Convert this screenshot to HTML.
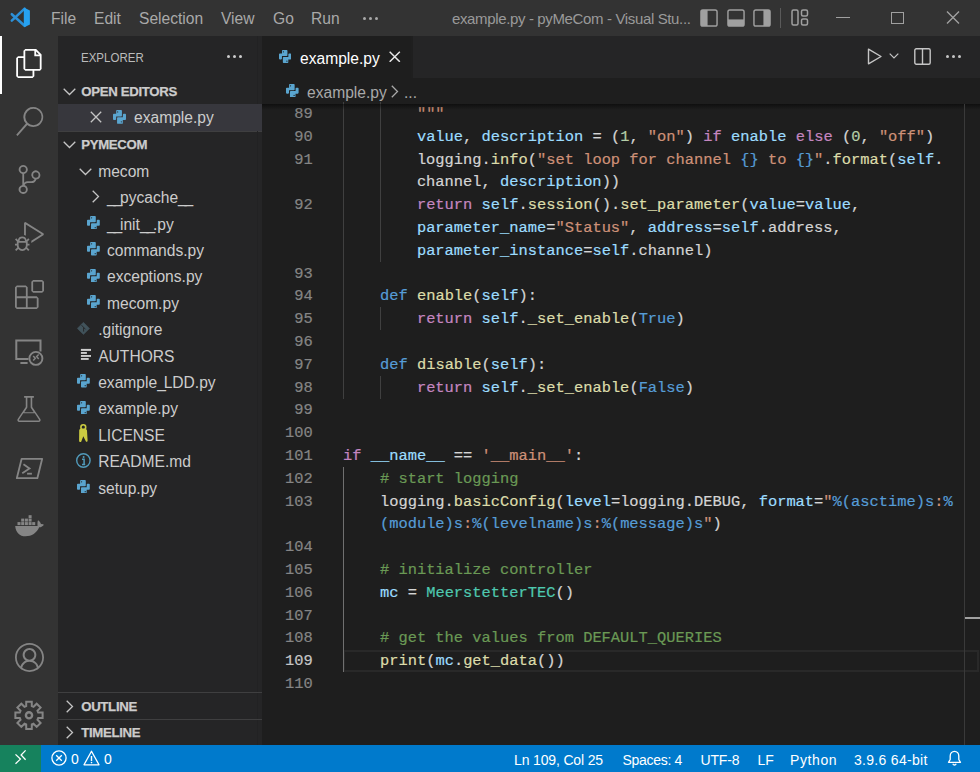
<!DOCTYPE html>
<html><head><meta charset="utf-8">
<style>
*{margin:0;padding:0;box-sizing:border-box}
html,body{width:980px;height:772px;overflow:hidden;background:#1e1e1e;font-family:"Liberation Sans",sans-serif}
.a{position:absolute}
.mt{position:absolute;color:#a9a9a9;font-size:15.6px;white-space:pre;line-height:18px}
.si{position:absolute;color:#cccccc;font-size:15.6px;white-space:pre;line-height:18px}
.hd{position:absolute;color:#cccccc;font-size:13.2px;font-weight:bold;letter-spacing:-0.3px;white-space:pre;line-height:16px;-webkit-text-stroke:0.25px}
.ln{position:absolute;left:0;width:312.8px;text-align:right;color:#858585;font-family:"Liberation Mono",monospace;font-size:15.4px;line-height:22.8px;white-space:pre;-webkit-text-stroke:0.2px}
.cl{position:absolute;left:343px;white-space:pre;color:#d4d4d4;font-family:"Liberation Mono",monospace;font-size:15.4px;line-height:22.8px;-webkit-text-stroke:0.2px}
.v{color:#9cdcfe}.f{color:#dcdcaa}.s{color:#ce9178}.k{color:#c586c0}.b{color:#569cd6}.n{color:#b5cea8}.c{color:#6a9955}.t{color:#4ec9b0}
.st{position:absolute;color:#fff;font-size:14px;letter-spacing:-0.15px;white-space:pre;line-height:16px}
svg{display:block}
</style></head><body>

<div class="a" style="left:0;top:0;width:980px;height:36px;background:#333333"></div>
<div class="a" style="left:0;top:36px;width:58px;height:709px;background:#333333"></div>
<div class="a" style="left:58px;top:36px;width:204px;height:709px;background:#252526"></div>
<div class="a" style="left:262px;top:36px;width:718px;height:42px;background:#252526"></div>
<div class="a" style="left:262px;top:36px;width:149px;height:42px;background:#1e1e1e"></div>
<div class="a" style="left:0;top:745px;width:980px;height:27px;background:#007acc"></div>
<div class="a" style="left:0;top:745px;width:41px;height:27px;background:#16825d"></div>
<svg class="a" style="left:5px;top:3px" width="32" height="30" viewBox="0 0 32 30"><path d="M19.6 5.6L6.8 17.6M6.8 11.2L19.6 22.8" stroke="#2c90d8" stroke-width="2.5" stroke-linecap="round"/><path d="M18.8 5.5L19.9 4.9 24.9 7.4V21.4L19.9 23.9 18.8 23.2Z" fill="#26a2f2"/></svg>
<div class="mt" style="left:51px;top:10px">File</div>
<div class="mt" style="left:94px;top:10px">Edit</div>
<div class="mt" style="left:139px;top:10px">Selection</div>
<div class="mt" style="left:221px;top:10px">View</div>
<div class="mt" style="left:273px;top:10px">Go</div>
<div class="mt" style="left:311px;top:10px">Run</div>
<div class="a" style="left:363px;top:17px;width:3px;height:3px;border-radius:50%;background:#a9a9a9"></div>
<div class="a" style="left:369px;top:17px;width:3px;height:3px;border-radius:50%;background:#a9a9a9"></div>
<div class="a" style="left:375px;top:17px;width:3px;height:3px;border-radius:50%;background:#a9a9a9"></div>
<div class="mt" style="left:452px;top:10px;color:#9a9a9a;font-size:15px;letter-spacing:-0.36px">example.py - pyMeCom - Visual Stu...</div>
<svg class="a" style="left:700.3px;top:8.5px" width="18" height="18" viewBox="0 0 19 19"><rect x="1" y="1" width="17" height="17" rx="2" fill="none" stroke="#a0a0a0" stroke-width="1.5"/><rect x="1" y="1" width="7" height="17" fill="#a0a0a0"/></svg>
<svg class="a" style="left:726.6px;top:8.5px" width="18" height="18" viewBox="0 0 19 19"><rect x="1" y="1" width="17" height="17" rx="2" fill="none" stroke="#a0a0a0" stroke-width="1.5"/><rect x="1" y="11" width="17" height="7" fill="#a0a0a0"/></svg>
<svg class="a" style="left:752.8px;top:8.5px" width="18" height="18" viewBox="0 0 19 19"><rect x="1" y="1" width="17" height="17" rx="2" fill="none" stroke="#a0a0a0" stroke-width="1.5"/><rect x="11" y="1" width="7" height="17" fill="#a0a0a0"/></svg>
<div class="a" style="left:780px;top:8px;width:1px;height:20px;background:#5a5a5a"></div>
<svg class="a" style="left:791px;top:9px" width="18" height="17" viewBox="0 0 18 17"><rect x="1" y="1" width="6" height="15" rx="1.5" fill="none" stroke="#a0a0a0" stroke-width="1.5"/><rect x="10.5" y="1" width="6" height="6" rx="1.5" fill="none" stroke="#a0a0a0" stroke-width="1.5"/><rect x="10.5" y="10" width="6" height="6" rx="1.5" fill="none" stroke="#a0a0a0" stroke-width="1.5"/></svg>
<div class="a" style="left:836px;top:17px;width:14px;height:1.3px;background:#a0a0a0"></div>
<div class="a" style="left:891px;top:12px;width:13px;height:12px;border:1.4px solid #a0a0a0"></div>
<svg class="a" style="left:946px;top:11px" width="14" height="13" viewBox="0 0 14 13"><path d="M1 .5L13 12.5M13 .5L1 12.5" stroke="#a0a0a0" stroke-width="1.4"/></svg>
<div class="a" style="left:0;top:36px;width:2px;height:58px;background:#ffffff"></div>
<svg class="a" style="left:14.5px;top:49.4px" width="29" height="29" viewBox="0 0 24 24" fill="#ffffff"><path d="M17.5 0h-9L7 1.5V6H2.5L1 7.5v15.07L2.5 24h12.07L16 22.57V18h4.7l1.3-1.43V4.5L17.5 0zm0 2.12l2.38 2.38H17.5V2.12zm-3 20.38h-12v-15H7v9.07L8.5 18h6v4.5zm6-6h-12v-15H16V6h4.5v10.5z"/></svg>
<svg class="a" style="left:14.5px;top:106.9px" width="29" height="29" viewBox="0 0 24 24" fill="#858585"><path d="M15.25 0a8.25 8.25 0 0 0-6.18 13.72L1 22.88l1.12 1.12 8.05-9.12A8.251 8.251 0 1 0 15.25.01V0zm0 15a6.75 6.75 0 1 1 0-13.5 6.75 6.75 0 0 1 0 13.5z"/></svg>
<svg class="a" style="left:14.5px;top:165.0px" width="29" height="29" viewBox="0 0 24 24" fill="#858585"><path d="M21.007 8.222A3.738 3.738 0 0 0 15.045 5.2a3.737 3.737 0 0 0 1.156 6.583 2.988 2.988 0 0 1-2.668 1.67h-2.99a4.456 4.456 0 0 0-2.989 1.165V7.4a3.737 3.737 0 1 0-1.494 0v9.117a3.776 3.776 0 1 0 1.816.099 2.99 2.99 0 0 1 2.668-1.667h2.99a4.484 4.484 0 0 0 4.223-3.039 3.736 3.736 0 0 0 3.25-3.687zM4.565 3.738a2.242 2.242 0 1 1 4.484 0 2.242 2.242 0 0 1-4.484 0zm4.484 16.441a2.242 2.242 0 1 1-4.484 0 2.242 2.242 0 0 1 4.484 0zm8.221-9.715a2.242 2.242 0 1 1 0-4.485 2.242 2.242 0 0 1 0 4.485z"/></svg>
<svg class="a" style="left:14.5px;top:222.1px" width="29" height="29" viewBox="0 0 24 24" fill="#858585"><path d="M10.94 13.5l-1.32 1.32a3.73 3.73 0 0 0-7.24 0L1.06 13.5 0 14.56l1.72 1.72-.22.22V18H0v1.5h1.5v.08c.077.489.214.966.41 1.42L0 22.94 1.06 24l1.65-1.65A4.308 4.308 0 0 0 6 24a4.31 4.31 0 0 0 3.29-1.650L10.940 24 12 22.94 10.09 21c.198-.464.336-.951.41-1.45v-.1H12V18h-1.5v-1.5l-.22-.22L12 14.56l-1.06-1.060zM6 13.5a2.25 2.25 0 0 1 2.25 2.25h-4.5A2.25 2.25 0 0 1 6 13.5zm3 6a3.33 3.33 0 0 1-3 3 3.33 3.33 0 0 1-3-3v-2.25h6v2.25zm14.76-9.9v1.26L13.5 17.37V15.6l8.5-5.37L9 2v9.46a5.07 5.07 0 0 0-1.5-.72V.63L8.64 0l15.12 9.6z"/></svg>
<svg class="a" style="left:14.5px;top:279.7px" width="29" height="29" viewBox="0 0 24 24" fill="#858585"><path d="M13.5 1.5L15 0h7.5L24 1.5V9l-1.5 1.5H15L13.5 9V1.5zm1.5 0V9h7.5V1.5H15zM0 15V6l1.5-1.5H9L10.5 6v7.5H18l1.5 1.5v7.5L18 24H1.5L0 22.5V15zm9-1.5V6H1.5v7.5H9zM9 15H1.5v7.5H9V15zm1.5 7.5H18V15h-7.5v7.5z"/></svg>
<svg class="a" style="left:0;top:332px" width="58" height="40" viewBox="0 0 58 40" fill="none" stroke="#858585"><path d="M28.5 27H16.3V8.4H40.5V19.5" stroke-width="2"/><path d="M20.4 31H27.6" stroke-width="2"/><circle cx="35.9" cy="26.4" r="6.5" stroke-width="1.9"/><path d="M33.2 23.9L35.3 26.2 33.2 28.5M38.7 22.4L36.6 24.6 38.7 26.9" stroke-width="1.5"/></svg>
<svg class="a" style="left:16.0px;top:396.0px" width="26" height="26" viewBox="0 0 24 24" fill="#858585"><path d="M22.47 21.26L15 10.21V1.5h1.5V0h-9v1.5H9v8.71L1.53 21.26A1.79 1.79 0 0 0 3 24h18a1.79 1.79 0 0 0 1.47-2.74zM10.24 11a1.38 1.38 0 0 0 .26-.82V1.5h3v8.71c.001.293.092.579.26.82l2.6 3.97H7.64L10.24 11zM21 22.5H3a.31.31 0 0 1-.28-.16.33.33 0 0 1 0-.32L6.66 16h10.68l3.94 6c.03.052.046.11.045.17a.33.33 0 0 1-.045.17.31.31 0 0 1-.28.16z"/></svg>
<svg class="a" style="left:14.5px;top:453.5px" width="29" height="29" viewBox="0 0 24 24" fill="#858585"><path d="M5.5 4h17l-4 16h-17z" fill="none" stroke="#858585" stroke-width="1.5" stroke-linejoin="round"/><path d="M7 8.5l5 3.5-6 4" fill="none" stroke="#858585" stroke-width="1.5"/><path d="M10 16.3h4" stroke="#858585" stroke-width="1.5"/></svg>
<svg class="a" style="left:0;top:500px" width="58" height="58" viewBox="0 0 58 58" fill="#858585"><path d="M15.2 25.9H37.6C37.4 24 37.4 21.8 38 20.2 39.6 21.2 40.6 22.6 41 24.2 42 23.9 43 24.1 43.9 24.7 43 26.3 41.2 27.2 39.2 27.3 36.8 33 31.6 36.3 25.6 36.3 19.6 36.3 15.6 32 15.2 25.9Z"/><g><rect x="17.5" y="22.1" width="3" height="3"/><rect x="21.2" y="22.1" width="3" height="3"/><rect x="24.9" y="22.1" width="3" height="3"/><rect x="28.6" y="22.1" width="3" height="3"/><rect x="32.2" y="22.1" width="3" height="3"/><rect x="21.2" y="18.6" width="3" height="3"/><rect x="24.9" y="18.6" width="3" height="3"/><rect x="28.6" y="18.6" width="3" height="3"/><rect x="28.6" y="15.2" width="3" height="3"/></g></svg>
<svg class="a" style="left:14.5px;top:643.0px" width="29" height="29" viewBox="0 0 16 16" fill="#858585"><path d="M16 7.992C16 3.58 12.416 0 8 0S0 3.58 0 7.992c0 2.43 1.104 4.62 2.832 6.09.016.016.032.016.032.032.144.112.288.224.448.336.08.048.144.111.224.175A7.98 7.98 0 0 0 8.016 16a7.98 7.980 0 0 0 4.48-1.375c.08-.048.144-.111.224-.16.144-.111.304-.223.448-.335.016-.016.032-.016.032-.032 1.696-1.487 2.8-3.676 2.8-6.106zm-8 7.001c-1.504 0-2.880-.48-4.016-1.279.016-.128.048-.255.08-.383a4.17 4.17 0 0 1 .416-.991c.176-.304.384-.576.64-.816.24-.24.528-.463.816-.639.304-.176.624-.304.976-.4A4.15 4.15 0 0 1 8 10.342a4.185 4.185 0 0 1 2.928 1.166c.368.368.656.8.864 1.295.112.288.192.592.24.911A7.03 7.03 0 0 1 8 14.993zm-2.448-7.4a2.49 2.49 0 0 1-.208-1.024c0-.351.064-.703.208-1.023.144-.32.336-.607.576-.847.24-.24.528-.431.848-.575.32-.144.672-.208 1.024-.208.368 0 .704.064 1.024.208.32.144.608.336.848.575.24.24.432.528.576.847.144.32.208.672.208 1.023 0 .368-.064.704-.208 1.023a2.84 2.84 0 0 1-.576.848 2.84 2.84 0 0 1-.848.575 2.715 2.715 0 0 1-2.064 0 2.84 2.84 0 0 1-.848-.575 2.526 2.526 0 0 1-.56-.848zm7.424 5.306c0-.032-.016-.048-.016-.08a5.22 5.22 0 0 0-.688-1.406 4.883 4.883 0 0 0-1.088-1.135 5.207 5.207 0 0 0-1.04-.608 2.82 2.82 0 0 0 .464-.383 4.2 4.2 0 0 0 .624-.784 3.624 3.624 0 0 0 .528-1.934 3.71 3.71 0 0 0-.288-1.47 3.799 3.799 0 0 0-.816-1.199 3.845 3.845 0 0 0-1.2-.8 3.72 3.72 0 0 0-1.472-.287 3.72 3.72 0 0 0-1.472.288 3.631 3.631 0 0 0-1.2.815 3.84 3.84 0 0 0-.8 1.199 3.71 3.71 0 0 0-.288 1.47c0 .352.048.688.144 1.007.096.336.224.64.4.927.16.288.384.544.624.784.144.144.304.271.48.383a5.12 5.12 0 0 0-1.04.624c-.416.32-.784.703-1.088 1.119a4.999 4.999 0 0 0-.688 1.406c-.016.032-.016.064-.016.08C1.776 11.636.992 9.91.992 7.992.992 4.140 4.144.991 8 .991s7.008 3.149 7.008 7.001a6.96 6.96 0 0 1-2.032 4.907z"/></svg>
<svg class="a" style="left:0;top:687px" width="58" height="58" viewBox="0 0 58 58"><path d="M26.19 19.12 L26.23 14.68 L31.77 14.68 L31.81 19.12 L33.51 19.82 L36.67 16.71 L40.59 20.63 L37.48 23.79 L38.18 25.49 L42.62 25.53 L42.62 31.07 L38.18 31.11 L37.48 32.81 L40.59 35.97 L36.67 39.89 L33.51 36.78 L31.81 37.48 L31.77 41.92 L26.23 41.92 L26.19 37.48 L24.49 36.78 L21.33 39.89 L17.41 35.97 L20.52 32.81 L19.82 31.11 L15.38 31.07 L15.38 25.53 L19.82 25.49 L20.52 23.79 L17.41 20.63 L21.33 16.71 L24.49 19.82Z" fill="none" stroke="#858585" stroke-width="2" stroke-linejoin="miter"/><circle cx="29" cy="28.3" r="3.1" fill="none" stroke="#858585" stroke-width="2.4"/></svg>
<div class="a" style="left:81px;top:50.5px;color:#bbbbbb;font-size:13.4px;white-space:pre;line-height:14px;transform:scaleX(0.86);transform-origin:0 0">EXPLORER</div>
<div class="a" style="left:227px;top:55px;width:3px;height:3px;border-radius:50%;background:#cccccc"></div>
<div class="a" style="left:233px;top:55px;width:3px;height:3px;border-radius:50%;background:#cccccc"></div>
<div class="a" style="left:239px;top:55px;width:3px;height:3px;border-radius:50%;background:#cccccc"></div>
<svg class="a" style="left:63px;top:88px" width="13" height="8" viewBox="0 0 13 8"><path d="M.7 .7l5.8 5.8 5.8-5.8" fill="none" stroke="#c5c5c5" stroke-width="1.3"/></svg>
<div class="hd" style="left:81.2px;top:84px">OPEN EDITORS</div>
<div class="a" style="left:58px;top:104px;width:204px;height:27px;background:#37373d"></div>
<svg class="a" style="left:90px;top:111px" width="12" height="12" viewBox="0 0 12 12"><path d="M.8 .8l10.4 10.4M11.2 .8L.8 11.2" stroke="#c5c5c5" stroke-width="1.3"/></svg>
<svg viewBox="0 0 12.3 13" width="13" height="13.739837398373982" style="position:absolute;left:112.8px;top:110px"><g fill="#5aa5cf" stroke="#5aa5cf" stroke-width="1.6" stroke-linejoin="round"><path d="M3.8 .8H7.65V5.25H2.15V8.6H.8V4.4H3.8Z"/><path d="M8.5 12.2H4.65V7.75H10.15V4.4H11.5V8.6H8.5Z"/></g><circle cx="4.4" cy="1.8" r=".6" fill="#37373d"/><circle cx="7.9" cy="11.2" r=".6" fill="#37373d"/></svg>
<div class="si" style="left:134px;top:109.2px">example.py</div>
<div class="a" style="left:58px;top:131px;width:204px;height:1px;background:#3f3f40"></div>
<svg class="a" style="left:63px;top:141px" width="13" height="8" viewBox="0 0 13 8"><path d="M.7 .7l5.8 5.8 5.8-5.8" fill="none" stroke="#c5c5c5" stroke-width="1.3"/></svg>
<div class="hd" style="left:81.2px;top:137px">PYMECOM</div>
<svg class="a" style="left:79px;top:168.2px" width="13" height="8" viewBox="0 0 13 8"><path d="M.7 .7l5.8 5.8 5.8-5.8" fill="none" stroke="#c5c5c5" stroke-width="1.3"/></svg>
<div class="si" style="left:98.2px;top:162.8px">mecom</div>
<svg class="a" style="left:92.3px;top:189.79999999999998px" width="8" height="13" viewBox="0 0 8 13"><path d="M.7 .7l5.8 5.8-5.8 5.8" fill="none" stroke="#c5c5c5" stroke-width="1.3"/></svg>
<div class="si" style="left:107.0px;top:189.2px"><span style="letter-spacing:-2.2px">_</span><span style="letter-spacing:-2.2px">_</span>pycache<span style="letter-spacing:-2.2px">_</span><span style="letter-spacing:-2.2px">_</span></div>
<svg viewBox="0 0 12.3 13" width="12.8" height="13.528455284552845" style="position:absolute;left:86.8px;top:215.7px"><g fill="#5aa5cf" stroke="#5aa5cf" stroke-width="1.6" stroke-linejoin="round"><path d="M3.8 .8H7.65V5.25H2.15V8.6H.8V4.4H3.8Z"/><path d="M8.5 12.2H4.65V7.75H10.15V4.4H11.5V8.6H8.5Z"/></g><circle cx="4.4" cy="1.8" r=".6" fill="#252526"/><circle cx="7.9" cy="11.2" r=".6" fill="#252526"/></svg>
<div class="si" style="left:107.0px;top:215.6px"><span style="letter-spacing:-2.2px">_</span><span style="letter-spacing:-2.2px">_</span>init<span style="letter-spacing:-2.2px">_</span><span style="letter-spacing:-2.2px">_</span>.py</div>
<svg viewBox="0 0 12.3 13" width="12.8" height="13.528455284552845" style="position:absolute;left:86.8px;top:242.09999999999997px"><g fill="#5aa5cf" stroke="#5aa5cf" stroke-width="1.6" stroke-linejoin="round"><path d="M3.8 .8H7.65V5.25H2.15V8.6H.8V4.4H3.8Z"/><path d="M8.5 12.2H4.65V7.75H10.15V4.4H11.5V8.6H8.5Z"/></g><circle cx="4.4" cy="1.8" r=".6" fill="#252526"/><circle cx="7.9" cy="11.2" r=".6" fill="#252526"/></svg>
<div class="si" style="left:107.0px;top:242.0px">commands.py</div>
<svg viewBox="0 0 12.3 13" width="12.8" height="13.528455284552845" style="position:absolute;left:86.8px;top:268.49999999999994px"><g fill="#5aa5cf" stroke="#5aa5cf" stroke-width="1.6" stroke-linejoin="round"><path d="M3.8 .8H7.65V5.25H2.15V8.6H.8V4.4H3.8Z"/><path d="M8.5 12.2H4.65V7.75H10.15V4.4H11.5V8.6H8.5Z"/></g><circle cx="4.4" cy="1.8" r=".6" fill="#252526"/><circle cx="7.9" cy="11.2" r=".6" fill="#252526"/></svg>
<div class="si" style="left:107.0px;top:268.4px">exceptions.py</div>
<svg viewBox="0 0 12.3 13" width="12.8" height="13.528455284552845" style="position:absolute;left:86.8px;top:294.9px"><g fill="#5aa5cf" stroke="#5aa5cf" stroke-width="1.6" stroke-linejoin="round"><path d="M3.8 .8H7.65V5.25H2.15V8.6H.8V4.4H3.8Z"/><path d="M8.5 12.2H4.65V7.75H10.15V4.4H11.5V8.6H8.5Z"/></g><circle cx="4.4" cy="1.8" r=".6" fill="#252526"/><circle cx="7.9" cy="11.2" r=".6" fill="#252526"/></svg>
<div class="si" style="left:107.0px;top:294.8px">mecom.py</div>
<svg class="a" style="left:77px;top:321.9px" width="13" height="13" viewBox="0 0 13 13"><path d="M6.4 .3L12.5 6.4 6.4 12.5 .3 6.4Z" fill="#41535b" stroke="#41535b" stroke-width=".6" stroke-linejoin="round"/><path d="M4.6 3.2L6.6 5.4V9.6M6.6 5.4L8.6 7.4" fill="none" stroke="#252526" stroke-width=".9"/></svg>
<div class="si" style="left:98.2px;top:321.2px">.gitignore</div>
<svg class="a" style="left:80px;top:347.7px" width="12" height="13" viewBox="0 0 12 13"><g fill="#cccccc"><rect x=".9" y=".9" width="10.1" height="2"/><rect x=".9" y="4" width="6" height="1.9"/><rect x=".9" y="7" width="10.1" height="1.9"/><rect x=".9" y="10" width="7.8" height="1.9"/></g></svg>
<div class="si" style="left:98.2px;top:347.6px">AUTHORS</div>
<svg viewBox="0 0 12.3 13" width="12.8" height="13.528455284552845" style="position:absolute;left:76.8px;top:374.09999999999997px"><g fill="#5aa5cf" stroke="#5aa5cf" stroke-width="1.6" stroke-linejoin="round"><path d="M3.8 .8H7.65V5.25H2.15V8.6H.8V4.4H3.8Z"/><path d="M8.5 12.2H4.65V7.75H10.15V4.4H11.5V8.6H8.5Z"/></g><circle cx="4.4" cy="1.8" r=".6" fill="#252526"/><circle cx="7.9" cy="11.2" r=".6" fill="#252526"/></svg>
<div class="si" style="left:98.2px;top:374.0px">example<span style="letter-spacing:-2.2px">_</span>LDD.py</div>
<svg viewBox="0 0 12.3 13" width="12.8" height="13.528455284552845" style="position:absolute;left:76.8px;top:400.49999999999994px"><g fill="#5aa5cf" stroke="#5aa5cf" stroke-width="1.6" stroke-linejoin="round"><path d="M3.8 .8H7.65V5.25H2.15V8.6H.8V4.4H3.8Z"/><path d="M8.5 12.2H4.65V7.75H10.15V4.4H11.5V8.6H8.5Z"/></g><circle cx="4.4" cy="1.8" r=".6" fill="#252526"/><circle cx="7.9" cy="11.2" r=".6" fill="#252526"/></svg>
<div class="si" style="left:98.2px;top:400.4px">example.py</div>
<svg class="a" style="left:74px;top:421.0px" width="20" height="24" viewBox="0 0 20 24"><circle cx="9.3" cy="6.2" r="2.4" fill="none" stroke="#cbcb41" stroke-width="1.6"/><path d="M5.2 9.2C5.2 8 6.5 7.7 9 7.7 11.5 7.7 13 8 13 9.5L13.6 19.5C13.7 20.8 12.3 21.3 11.8 20.3L9.3 15.2 7.3 20.5C6.9 21.5 5 21.2 5.1 19.8Z" fill="#cbcb41"/></svg>
<div class="si" style="left:98.2px;top:426.8px">LICENSE</div>
<svg class="a" style="left:76px;top:453.0px" width="15" height="15" viewBox="0 0 15 15"><circle cx="7.4" cy="7.5" r="6.7" fill="none" stroke="#519aba" stroke-width="1.4"/><path d="M6 6.3H8.1V11.2M6 11.4H9.2" fill="none" stroke="#519aba" stroke-width="1.5"/><circle cx="7.6" cy="4" r="1" fill="#519aba"/></svg>
<div class="si" style="left:98.2px;top:453.2px">README.md</div>
<svg viewBox="0 0 12.3 13" width="12.8" height="13.528455284552845" style="position:absolute;left:76.8px;top:479.69999999999993px"><g fill="#5aa5cf" stroke="#5aa5cf" stroke-width="1.6" stroke-linejoin="round"><path d="M3.8 .8H7.65V5.25H2.15V8.6H.8V4.4H3.8Z"/><path d="M8.5 12.2H4.65V7.75H10.15V4.4H11.5V8.6H8.5Z"/></g><circle cx="4.4" cy="1.8" r=".6" fill="#252526"/><circle cx="7.9" cy="11.2" r=".6" fill="#252526"/></svg>
<div class="si" style="left:98.2px;top:479.6px">setup.py</div>
<div class="a" style="left:257px;top:36px;width:1px;height:68px;background:#222223"></div>
<div class="a" style="left:257px;top:131px;width:1px;height:614px;background:#222223"></div>
<div class="a" style="left:58px;top:692px;width:204px;height:1px;background:#3f3f40"></div>
<svg class="a" style="left:66.3px;top:700px" width="8" height="13" viewBox="0 0 8 13"><path d="M.7 .7l5.8 5.8-5.8 5.8" fill="none" stroke="#c5c5c5" stroke-width="1.3"/></svg>
<div class="hd" style="left:81.2px;top:699px">OUTLINE</div>
<div class="a" style="left:58px;top:719px;width:204px;height:1px;background:#3f3f40"></div>
<svg class="a" style="left:66.3px;top:726.3px" width="8" height="13" viewBox="0 0 8 13"><path d="M.7 .7l5.8 5.8-5.8 5.8" fill="none" stroke="#c5c5c5" stroke-width="1.3"/></svg>
<div class="hd" style="left:81.2px;top:725px">TIMELINE</div>
<svg viewBox="0 0 12.3 13" width="12.3" height="13.0" style="position:absolute;left:278.7px;top:50.3px"><g fill="#5aa5cf" stroke="#5aa5cf" stroke-width="1.6" stroke-linejoin="round"><path d="M3.8 .8H7.65V5.25H2.15V8.6H.8V4.4H3.8Z"/><path d="M8.5 12.2H4.65V7.75H10.15V4.4H11.5V8.6H8.5Z"/></g><circle cx="4.4" cy="1.8" r=".6" fill="#1e1e1e"/><circle cx="7.9" cy="11.2" r=".6" fill="#1e1e1e"/></svg>
<div class="si" style="left:300px;top:50px;color:#ffffff">example.py</div>
<svg class="a" style="left:389px;top:50.8px" width="11.5" height="11.5" viewBox="0 0 12 12"><path d="M.7 .7l10.6 10.6M11.3 .7L.7 11.3" stroke="#e8e8e8" stroke-width="1.5"/></svg>
<div class="a" style="left:410.5px;top:36px;width:2px;height:42px;background:#1f1f1f"></div>
<svg class="a" style="left:867px;top:48px" width="16" height="17" viewBox="0 0 16 17"><path d="M1.5 1.2v14.6L14 8.5z" fill="none" stroke="#c5c5c5" stroke-width="1.4" stroke-linejoin="round"/></svg>
<svg class="a" style="left:889px;top:53px" width="10" height="7" viewBox="0 0 10 7"><path d="M.7 .7l4.3 4.3 4.3-4.3" fill="none" stroke="#c5c5c5" stroke-width="1.2"/></svg>
<svg class="a" style="left:914px;top:48px" width="17" height="17" viewBox="0 0 17 17"><rect x=".8" y=".8" width="15.4" height="15.4" rx="1.5" fill="none" stroke="#c5c5c5" stroke-width="1.4"/><path d="M8.5 1v15" stroke="#c5c5c5" stroke-width="1.4"/></svg>
<div class="a" style="left:945.5px;top:55px;width:3px;height:3px;border-radius:50%;background:#c5c5c5"></div>
<div class="a" style="left:951.5px;top:55px;width:3px;height:3px;border-radius:50%;background:#c5c5c5"></div>
<div class="a" style="left:957.5px;top:55px;width:3px;height:3px;border-radius:50%;background:#c5c5c5"></div>
<svg viewBox="0 0 12.3 13" width="12.6" height="13.317073170731705" style="position:absolute;left:286px;top:84px"><g fill="#5aa5cf" stroke="#5aa5cf" stroke-width="1.6" stroke-linejoin="round"><path d="M3.8 .8H7.65V5.25H2.15V8.6H.8V4.4H3.8Z"/><path d="M8.5 12.2H4.65V7.75H10.15V4.4H11.5V8.6H8.5Z"/></g><circle cx="4.4" cy="1.8" r=".6" fill="#1e1e1e"/><circle cx="7.9" cy="11.2" r=".6" fill="#1e1e1e"/></svg>
<div class="si" style="left:307px;top:84px;color:#a9a9a9">example.py</div>
<svg class="a" style="left:391px;top:84.5px" width="7.5" height="13" viewBox="0 0 7.5 13"><path d="M.8 .8l5.7 5.7-5.7 5.7" fill="none" stroke="#a9a9a9" stroke-width="1.3"/></svg>
<div class="si" style="left:404px;top:84px;color:#a9a9a9">...</div>
<div class="a" style="left:343px;top:649.5px;width:636px;height:22.8px;border:2px solid #292929"></div>
<div class="a" style="left:343.0px;top:102.2px;width:1px;height:296.4px;background:#404040"></div>
<div class="a" style="left:380.0px;top:102.2px;width:1px;height:159.6px;background:#404040"></div>
<div class="a" style="left:380.0px;top:307.4px;width:1px;height:22.8px;background:#404040"></div>
<div class="a" style="left:380.0px;top:375.8px;width:1px;height:22.8px;background:#404040"></div>
<div class="a" style="left:343.0px;top:467.0px;width:1px;height:205.2px;background:#707070"></div>
<div class="ln" style="top:103.0px;color:#858585">89</div>
<div class="cl" style="top:103.0px">        <span class="s">"""</span></div>
<div class="ln" style="top:125.8px;color:#858585">90</div>
<div class="cl" style="top:125.8px">        <span class="v">value</span>, <span class="v">description</span> = (<span class="n">1</span>, <span class="s">"on"</span>) <span class="k">if</span> <span class="v">enable</span> <span class="k">else</span> (<span class="n">0</span>, <span class="s">"off"</span>)</div>
<div class="ln" style="top:148.6px;color:#858585">91</div>
<div class="cl" style="top:148.6px">        logging.<span class="f">info</span>(<span class="s">"set loop for channel </span><span class="b">{}</span><span class="s"> to </span><span class="b">{}</span><span class="s">"</span>.<span class="f">format</span>(<span class="v">self</span>.</div>
<div class="cl" style="top:171.4px">        channel, <span class="v">description</span>))</div>
<div class="ln" style="top:194.2px;color:#858585">92</div>
<div class="cl" style="top:194.2px">        <span class="k">return</span> <span class="v">self</span>.<span class="f">session</span>().<span class="f">set_parameter</span>(<span class="v">value</span>=<span class="v">value</span>,</div>
<div class="cl" style="top:217.0px">        <span class="v">parameter_name</span>=<span class="s">"Status"</span>, <span class="v">address</span>=<span class="v">self</span>.address,</div>
<div class="cl" style="top:239.8px">        <span class="v">parameter_instance</span>=<span class="v">self</span>.channel)</div>
<div class="ln" style="top:262.6px;color:#858585">93</div>
<div class="ln" style="top:285.4px;color:#858585">94</div>
<div class="cl" style="top:285.4px">    <span class="b">def</span> <span class="f">enable</span>(<span class="v">self</span>):</div>
<div class="ln" style="top:308.2px;color:#858585">95</div>
<div class="cl" style="top:308.2px">        <span class="k">return</span> <span class="v">self</span>.<span class="f">_set_enable</span>(<span class="b">True</span>)</div>
<div class="ln" style="top:331.0px;color:#858585">96</div>
<div class="ln" style="top:353.8px;color:#858585">97</div>
<div class="cl" style="top:353.8px">    <span class="b">def</span> <span class="f">disable</span>(<span class="v">self</span>):</div>
<div class="ln" style="top:376.6px;color:#858585">98</div>
<div class="cl" style="top:376.6px">        <span class="k">return</span> <span class="v">self</span>.<span class="f">_set_enable</span>(<span class="b">False</span>)</div>
<div class="ln" style="top:399.4px;color:#858585">99</div>
<div class="ln" style="top:422.2px;color:#858585">100</div>
<div class="ln" style="top:445.0px;color:#858585">101</div>
<div class="cl" style="top:445.0px"><span class="k">if</span> <span class="v">__name__</span> == <span class="s">'__main__'</span>:</div>
<div class="ln" style="top:467.8px;color:#858585">102</div>
<div class="cl" style="top:467.8px">    <span class="c"># start logging</span></div>
<div class="ln" style="top:490.6px;color:#858585">103</div>
<div class="cl" style="top:490.6px">    logging.<span class="f">basicConfig</span>(<span class="v">level</span>=logging.DEBUG, <span class="v">format</span>=<span class="s">"</span><span class="b">%(asctime)s</span><span class="s">:</span><span class="b">%</span></div>
<div class="cl" style="top:513.4px">    <span class="b">(module)s</span><span class="s">:</span><span class="b">%(levelname)s</span><span class="s">:</span><span class="b">%(message)s</span><span class="s">"</span>)</div>
<div class="ln" style="top:536.2px;color:#858585">104</div>
<div class="ln" style="top:559.0px;color:#858585">105</div>
<div class="cl" style="top:559.0px">    <span class="c"># initialize controller</span></div>
<div class="ln" style="top:581.8px;color:#858585">106</div>
<div class="cl" style="top:581.8px">    <span class="v">mc</span> = <span class="t">MeerstetterTEC</span>()</div>
<div class="ln" style="top:604.6px;color:#858585">107</div>
<div class="ln" style="top:627.4px;color:#858585">108</div>
<div class="cl" style="top:627.4px">    <span class="c"># get the values from DEFAULT_QUERIES</span></div>
<div class="ln" style="top:650.2px;color:#c6c6c6">109</div>
<div class="cl" style="top:650.2px">    <span class="f">print</span>(<span class="v">mc</span>.<span class="f">get_data</span>())</div>
<div class="ln" style="top:673.0px;color:#858585">110</div>
<div class="a" style="left:262px;top:104px;width:718px;height:6px;background:linear-gradient(#00000080,#00000000)"></div>
<div class="a" style="left:964px;top:104px;width:1px;height:641px;background:#3a3a3a"></div>
<div class="a" style="left:965px;top:617px;width:15px;height:2px;background:#a0a0a0"></div>
<svg class="a" style="left:14px;top:749px" width="13" height="16" viewBox="0 0 13 16"><path d="M1.5 5.4L6.4 10.1 1.5 14.7M11.6 1.4L7.1 6 11.6 10.7" fill="none" stroke="#fff" stroke-width="1.3"/></svg>
<svg class="a" style="left:51px;top:750px" width="16" height="16" viewBox="0 0 16 16"><circle cx="8" cy="8" r="7.1" fill="none" stroke="#fff" stroke-width="1.3"/><path d="M5.2 5.2l5.6 5.6M10.8 5.2l-5.6 5.6" stroke="#fff" stroke-width="1.3"/></svg>
<div class="st" style="left:71px;top:751px">0</div>
<svg class="a" style="left:83px;top:750px" width="17" height="16" viewBox="0 0 17 16"><path d="M8.5 1.2L1 14.8h15z" fill="none" stroke="#fff" stroke-width="1.3" stroke-linejoin="round"/><path d="M8.5 6v5" stroke="#fff" stroke-width="1.4"/><circle cx="8.5" cy="12.6" r=".8" fill="#fff"/></svg>
<div class="st" style="left:104px;top:751px">0</div>
<div class="st" style="left:514px;top:751.5px;letter-spacing:-0.15px">Ln 109, Col 25</div>
<div class="st" style="left:622.5px;top:751.5px;letter-spacing:-0.3px">Spaces: 4</div>
<div class="st" style="left:700.5px;top:751.5px;letter-spacing:-0.15px">UTF-8</div>
<div class="st" style="left:757.5px;top:751.5px;letter-spacing:-0.15px">LF</div>
<div class="st" style="left:790px;top:751.5px;letter-spacing:0.6px">Python</div>
<div class="st" style="left:854px;top:751.5px;letter-spacing:0.3px">3.9.6 64-bit</div>
<svg class="a" style="left:947px;top:750px" width="15" height="16" viewBox="0 0 15 16"><path d="M7.5 1.3c-2.6 0-4.3 2-4.3 4.6v3.6L1.5 12.3h12l-1.7-2.8V5.9c0-2.6-1.7-4.6-4.3-4.6z" fill="none" stroke="#fff" stroke-width="1.3" stroke-linejoin="round"/><path d="M5.8 13.8c.4.8 1 1.2 1.7 1.2s1.3-.4 1.7-1.2" fill="none" stroke="#fff" stroke-width="1.3"/></svg>
</body></html>
